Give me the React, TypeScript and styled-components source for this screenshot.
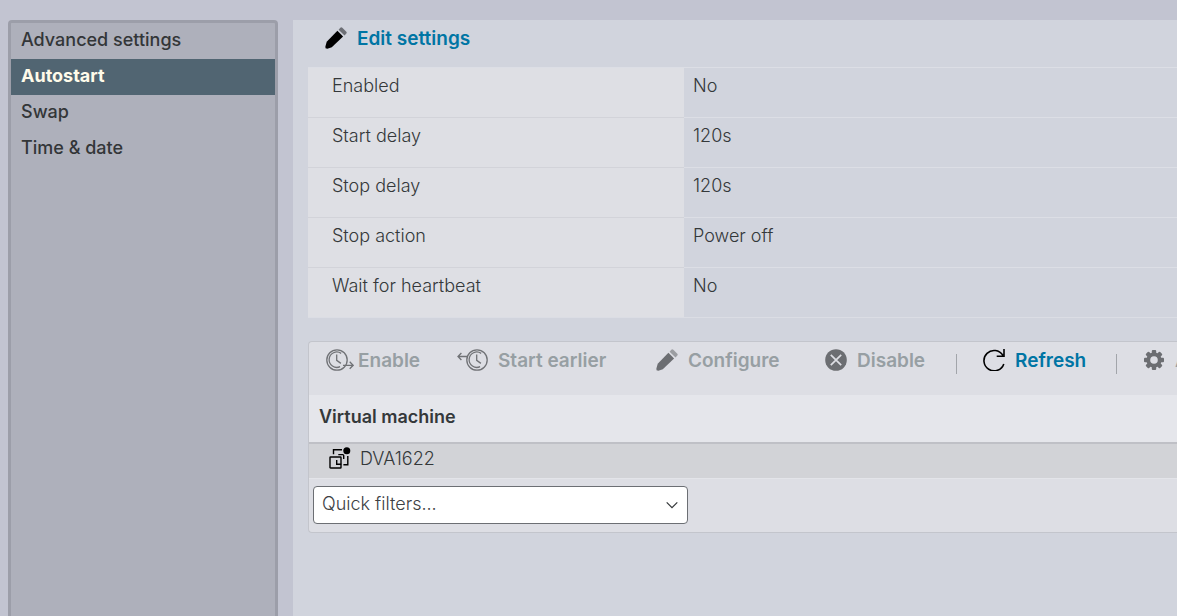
import React from "react";
import styled, { createGlobalStyle } from "styled-components";

const GlobalStyle = createGlobalStyle`
  *, *::before, *::after { box-sizing: border-box; }
  body {
    margin: 0;
    background: #c2c4d1;
    color: #34383a;
    font-family: Inter, "Open Sans", sans-serif;
    font-size: 18px;
    line-height: 24px;
    overflow-x: hidden;
  }
`;

const Page = styled.div`
  display: grid;
  grid-template-columns: 270px minmax(0, 1fr);
  column-gap: 15px;
  min-height: 100vh;
  padding: 20px 0 0 8px;
`;

const Sidebar = styled.nav`
  border: 3px solid #9c9ea9;
  border-bottom: 0;
  border-radius: 4px 4px 0 0;
  background: #aeb0bb;
`;

const NavLink = styled.a<{ $active?: boolean }>`
  display: block;
  padding: 5px 10px 7px;
  color: ${(p) => (p.$active ? "#fffbea" : "#333638")};
  background: ${(p) => (p.$active ? "#516572" : "transparent")};
  font-weight: ${(p) => (p.$active ? 700 : 500)};
  text-decoration: none;
`;

const Content = styled.main`
  padding: 0 0 24px 15px;
  background: #d1d4dd;
  overflow: hidden;
`;

const ActionButton = styled.button`
  display: inline-flex;
  align-items: center;
  gap: 10px;
  height: 38px;
  padding: 0;
  border: 0;
  background: none;
  color: #0075a4;
  font: inherit;
  font-size: 19px;
  font-weight: 600;
  white-space: nowrap;
  cursor: pointer;
  &:disabled { color: #979fa3; cursor: default; }
  svg { flex: none; margin-bottom: 2px; }
`;

const EditBar = styled.div`
  display: flex;
  height: 47px;
  padding-left: 17px;
`;

const Properties = styled.table`
  width: 100%;
  border-collapse: separate;
  border-spacing: 0;
  table-layout: fixed;
  border-bottom: 1px solid #dbdde4;
`;

const PropertyName = styled.th`
  width: 376px;
  height: 50px;
  padding: 6px 24px;
  border-top: 1px solid #d2d3d9;
  background: #dedfe4;
  font-weight: 300;
  text-align: left;
  vertical-align: top;
  tr:first-child > & { border-top-color: #dcdee5; }
`;

const PropertyValue = styled.td`
  padding: 6px 9px;
  border-top: 1px solid #dcdee5;
  vertical-align: top;
  font-weight: 300;
`;

const Panel = styled.section`
  margin-top: 23px;
  border: 1px solid #c3c5cc;
  border-right: 0;
  border-radius: 4px 0 0 4px;
  background: #dddee4;
`;

const Toolbar = styled.div`
  display: flex;
  height: 53px;
  padding-left: 17px;
`;

const Slot = styled.div<{ $width: number }>`
  flex: 0 0 ${(p) => p.$width}px;
`;

const Divider = styled.span`
  flex: none;
  width: 1px;
  height: 20px;
  margin: 12px 26px 0 0;
  background: #a2a5aa;
`;

const Grid = styled.table`
  width: 100%;
  border-collapse: separate;
  border-spacing: 0;
`;

const ColumnHead = styled.th`
  height: 49px;
  padding: 0 10px 4px;
  border-bottom: 2px solid #bfc0c6;
  background: #e5e6eb;
  font-weight: 600;
  text-align: left;
`;

const MachineCell = styled.td`
  height: 34px;
  padding: 0 20px 4px;
  background: #d2d3d7;
  font-weight: 300;
`;

const Machine = styled.span`
  display: flex;
  align-items: center;
  gap: 9px;
  svg { margin-bottom: 2px; }
`;

const Footer = styled.div`
  padding: 7px 4px 8px;
  border-top: 1px solid #e3e4e9;
`;

const FilterBox = styled.div`
  display: grid;
  width: 375px;
  max-width: 100%;
  align-items: center;
  svg {
    grid-area: 1 / 1;
    justify-self: end;
    margin-right: 10px;
    pointer-events: none;
    z-index: 1;
  }
`;

const FilterSelect = styled.select`
  grid-area: 1 / 1;
  width: 100%;
  height: 38px;
  padding: 0 36px 3px 8px;
  appearance: none;
  border: 1px solid #6c6f74;
  border-radius: 4px;
  background: #fff;
  color: #3d4144;
  font: inherit;
  font-weight: 300;
`;

const Pencil = ({ muted = false }: { muted?: boolean }) => (
  <svg width="22" height="22" viewBox="0 0 22 22" aria-hidden="true">
    <path d="M12.4 3.8 18.1 9.4 6.8 20.3 2.4 21.7 .5 21.3 .4 19.5 1.7 14.7Z" fill={muted ? "#6c6e72" : "#000"} />
    <path d="m13.6 2.7 1.7-1.9q1-.9 2 0l4 4q.8.9 0 1.8l-1.8 1.8Z" fill={muted ? "#9b9da1" : "#6d6f75"} />
  </svg>
);

const Clock = ({ x }: { x: number }) => (
  <g fill="none" stroke="#707276" strokeWidth="1.3">
    <circle cx={x} cy="11" r="10.2" />
    <path d={`M${x + 4.2} 4.4a7.7 7.7 0 1 0-1.1 13.3M${x - 0.3} 5.4v6l4.2 3`} />
  </g>
);

const EnableIcon = () => (
  <svg width="28" height="22" viewBox="0 0 28 22" aria-hidden="true">
    <Clock x={11} />
    <path d="M17 16.3h10M23.7 12.8l3.5 3.5-3.5 3.5" fill="none" stroke="#707276" strokeWidth="1.3" />
  </svg>
);

const EarlierIcon = () => (
  <svg width="31" height="22" viewBox="0 0 31 22" aria-hidden="true">
    <Clock x={20} />
    <path d="M11 7.5H1M4.4 4 1 7.5 4.4 11" fill="none" stroke="#707276" strokeWidth="1.3" />
  </svg>
);

const DisableIcon = () => (
  <svg width="22" height="22" viewBox="0 0 22 22" aria-hidden="true">
    <circle cx="11" cy="11" r="10.8" fill="#6c6e72" />
    <path d="m5.8 5.8 10.4 10.4M16.2 5.8 5.8 16.2" stroke="#dddee4" strokeWidth="1.7" />
  </svg>
);

const RefreshIcon = () => (
  <svg width="22" height="22" viewBox="0 0 22 22" aria-hidden="true">
    <path d="M20.8 15A10.2 10.2 0 1 1 19.9 6.4M21 0v7.3h-7.3" fill="none" stroke="#000" strokeWidth="1.6" />
  </svg>
);

const GearIcon = () => (
  <svg width="22" height="20" viewBox="-1 0 22 20" aria-hidden="true">
    <g fill="#6c6e72">
      {[0, 45, 90, 135].map((a) => (
        <rect key={a} x="7.8" y="0" width="4.4" height="20" rx="1" transform={`rotate(${a} 10 10)`} />
      ))}
      <circle cx="10" cy="10" r="7.6" />
    </g>
    <circle cx="10" cy="10" r="3.8" fill="#dddee4" />
  </svg>
);

const MachineIcon = () => (
  <svg width="22" height="22" viewBox="0 0 22 22" aria-hidden="true">
    <g fill="none" stroke="#000" strokeWidth="1.4">
      <rect x="1" y="10" width="11" height="11" rx=".6" />
      <path d="M4.5 7.3V2.8H13M18.8 9v8.7h-4.4M9.3 7.6h4.4q1 0 1 1v3.3M7.7 13v4.2h4.5" />
    </g>
    <circle cx="17.8" cy="3.7" r="3.5" />
  </svg>
);

const Chevron = () => (
  <svg width="12" height="8" viewBox="0 0 12 8" aria-hidden="true">
    <path d="m.7 1.4 5.3 5.3 5.3-5.3" fill="none" stroke="#333638" strokeWidth="1.2" />
  </svg>
);

const sections = ["Advanced settings", "Autostart", "Swap", "Time & date"];

const properties = [
  ["Enabled", "No"],
  ["Start delay", "120s"],
  ["Stop delay", "120s"],
  ["Stop action", "Power off"],
  ["Wait for heartbeat", "No"],
];

const EnableButton = styled(ActionButton)`
  gap: 4px;
`;

export default function App() {
  return (
    <>
      <GlobalStyle />
      <Page>
        <Sidebar aria-label="System settings">
          {sections.map((name) => (
            <NavLink key={name} href="#" $active={name === "Autostart"} aria-current={name === "Autostart" ? "page" : undefined}>
              {name}
            </NavLink>
          ))}
        </Sidebar>
        <Content>
          <EditBar>
            <ActionButton type="button"><Pencil />Edit settings</ActionButton>
          </EditBar>
          <Properties>
            <tbody>
              {properties.map(([name, value]) => (
                <tr key={name}>
                  <PropertyName scope="row">{name}</PropertyName>
                  <PropertyValue>{value}</PropertyValue>
                </tr>
              ))}
            </tbody>
          </Properties>
          <Panel>
            <Toolbar>
              <Slot $width={131}><EnableButton type="button" disabled><EnableIcon />Enable</EnableButton></Slot>
              <Slot $width={199}><ActionButton type="button" disabled><EarlierIcon />Start earlier</ActionButton></Slot>
              <Slot $width={169}><ActionButton type="button" disabled><Pencil muted />Configure</ActionButton></Slot>
              <Slot $width={131}><ActionButton type="button" disabled><DisableIcon />Disable</ActionButton></Slot>
              <Divider />
              <Slot $width={133}><ActionButton type="button"><RefreshIcon />Refresh</ActionButton></Slot>
              <Divider />
              <ActionButton type="button" disabled><GearIcon />Actions</ActionButton>
            </Toolbar>
            <Grid>
              <thead>
                <tr><ColumnHead scope="col">Virtual machine</ColumnHead></tr>
              </thead>
              <tbody>
                <tr><MachineCell><Machine><MachineIcon />DVA1622</Machine></MachineCell></tr>
              </tbody>
            </Grid>
            <Footer>
              <FilterBox>
                <FilterSelect aria-label="Quick filters" defaultValue="">
                  <option value="">Quick filters...</option>
                </FilterSelect>
                <Chevron />
              </FilterBox>
            </Footer>
          </Panel>
        </Content>
      </Page>
    </>
  );
}
